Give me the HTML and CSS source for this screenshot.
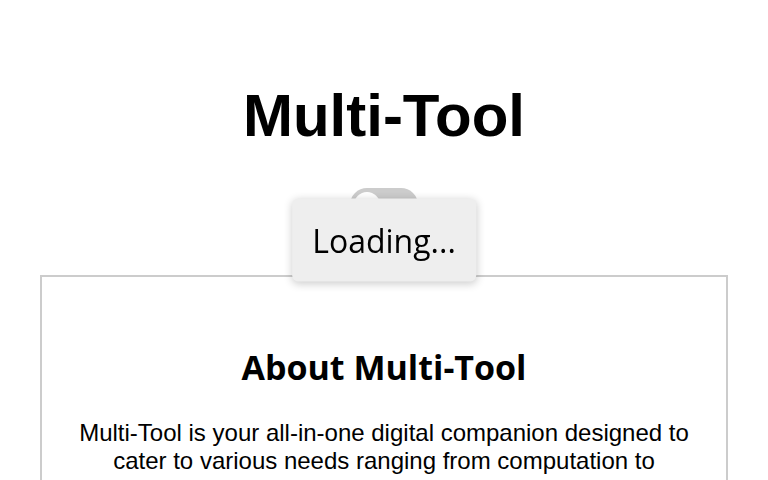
FILE: index.html
```html
<!DOCTYPE html>
<html lang="en">
<head>
<meta charset="utf-8">
<title>Multi-Tool</title>
<link rel="stylesheet" href="styles.css">
</head>
<body>
<header class="hero">
  <h1 class="title">Multi-Tool</h1>
  <label class="switch">
    <span class="knob"></span>
  </label>
</header>
<main class="about">
  <h2 class="about-title">About Multi-Tool</h2>
  <p class="about-text">Multi-Tool is your all-in-one digital companion designed to cater to various needs ranging from computation to productivity and daily utility, all in one place.</p>
</main>
<div class="loading">Loading...</div>
</body>
</html>
```
FILE: styles.css
```css
html, body {
  margin: 0;
  padding: 0;
  background: #fff;
  color: #000;
}
body {
  font-family: "Liberation Sans", Arial, sans-serif;
}
.hero {
  display: flex;
  flex-direction: column;
  align-items: center;
  padding-top: 81px;
}
.title {
  margin: 0;
  font-size: 60px;
  line-height: 69px;
  font-weight: bold;
}
.switch {
  display: block;
  position: relative;
  width: 68px;
  height: 34px;
  margin-top: 38px;
  border-radius: 17px;
  background: #ccc;
}
.knob {
  position: absolute;
  left: 4px;
  top: 4px;
  width: 26px;
  height: 26px;
  border-radius: 50%;
  background: #fff;
}
.about {
  margin: 53px 40px 0;
  border: 2px solid #ccc;
  padding: 36px 30px;
  text-align: center;
}
.about-title {
  margin: 30px 0 28px;
  font-family: "Open Sans", "Noto Sans", sans-serif;
  font-size: 34px;
  line-height: 48px;
  font-weight: bold;
}
.about-text {
  margin: 0;
  font-size: 24px;
  line-height: 28px;
}
.loading {
  position: fixed;
  left: 50%;
  top: 50%;
  transform: translate(-50%, -50%);
  padding: 20px;
  background: #eee;
  border-radius: 6px;
  box-shadow: 0 2px 8px rgba(0, 0, 0, 0.2);
  font-family: "Open Sans", "Noto Sans", sans-serif;
  font-size: 32px;
  line-height: 43px;
  white-space: nowrap;
}
```
